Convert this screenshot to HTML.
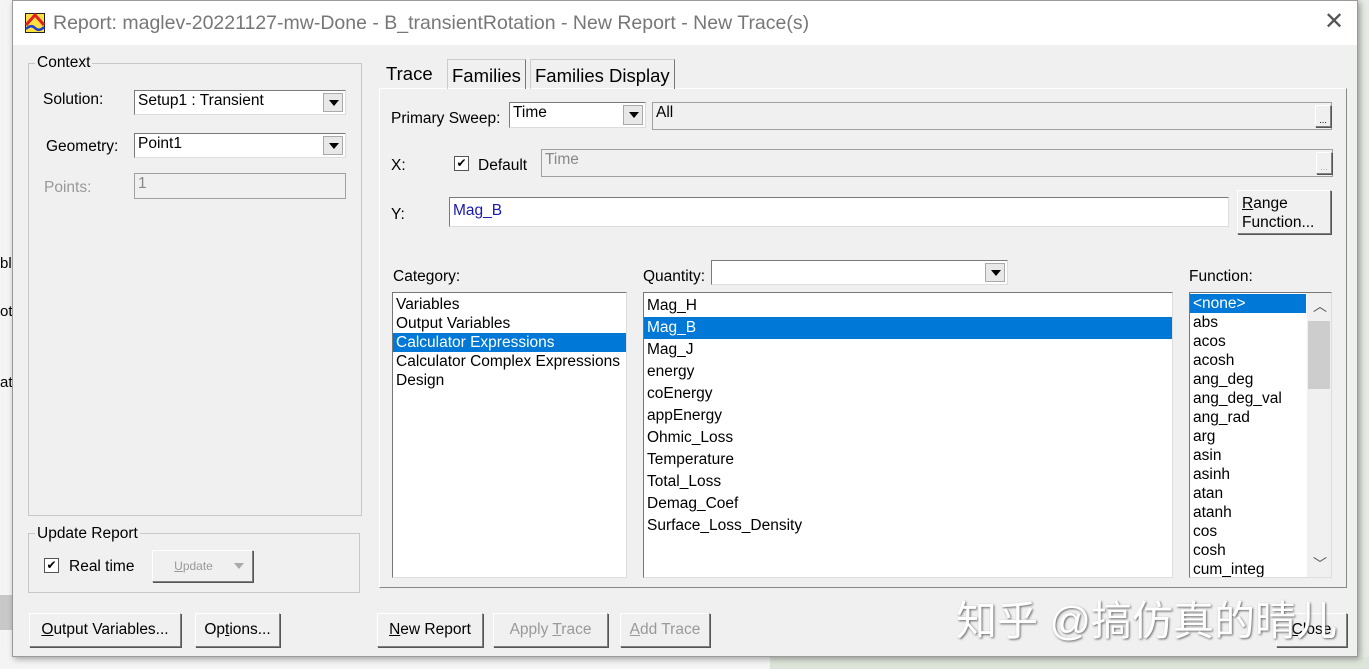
<!DOCTYPE html>
<html><head><meta charset="utf-8"><style>
*{box-sizing:border-box;margin:0;padding:0}
body{width:1369px;height:669px;overflow:hidden;background:#f4f4f4;font-family:"Liberation Sans","Noto Sans CJK SC",sans-serif;font-size:15.5px;color:#000;position:relative}
.a{position:absolute;white-space:nowrap}
.dlg{position:absolute;left:12px;top:0;width:1346px;height:657px;background:#f0f0f0;border:1px solid #9a9a9a;box-shadow:2px 2px 6px rgba(0,0,0,.35)}
.title{position:absolute;left:0;top:0;width:100%;height:44px;background:#fff}
.grp{position:absolute;border:1px solid #c8c8c8}
.lbl{position:absolute;background:#f0f0f0;padding:0 2px}
.in{position:absolute;background:#fff;border:1px solid #7a7a7a;border-right-color:#ddd;border-bottom-color:#ddd;padding:1px 3px}
.dis{background:#f0f0f0;color:#888;border-color:#a0a0a0}
.dd{position:absolute;right:2px;top:2px;width:20px;bottom:2px;background:#e8e8e8;border:1px solid #aaa}
.dd:after{content:"";position:absolute;left:5px;top:6px;border-left:5px solid transparent;border-right:5px solid transparent;border-top:6px solid #000}
.btn{position:absolute;background:#f0f0f0;border:1px solid #fff;border-right-color:#808080;border-bottom-color:#808080;box-shadow:1px 1px 0 #555;text-align:center}
.list{position:absolute;background:#fff;border:1px solid #777;border-right-color:#ddd;border-bottom-color:#ddd;line-height:19px}
.sel{background:#0078d7;color:#fff}
.chk{position:absolute;width:15px;height:15px;background:#fff;border:1px solid #555;font-size:12px;line-height:13px;text-align:center}
u{text-decoration:underline}
</style></head><body>
<div class="a" style="left:0;top:255px;font-size:15px">bl</div>
<div class="a" style="left:0;top:303px;font-size:15px">ot</div>
<div class="a" style="left:0;top:374px;font-size:15px">ati</div>
<div class="a" style="left:0;top:595px;width:12px;height:35px;background:#c8c8c8"></div>
<div class="a" style="left:1358px;top:0;width:11px;height:669px;background:#e6ebe4"></div>
<div class="a" style="left:770px;top:657px;width:599px;height:12px;background:#dde5da"></div>
<div class="dlg">
 <div class="title">
  <svg class="a" style="left:12px;top:12px" width="20" height="20" viewBox="0 0 20 20"><rect x="0.5" y="0.5" width="19" height="19" fill="#ffe040" stroke="#222"/><path d="M1 12 L10 2 L19 12" stroke="#e02020" stroke-width="3" fill="none"/><path d="M1 16 Q6 11 10 15 T19 14" stroke="#2040d0" stroke-width="2.5" fill="none"/></svg>
  <div class="a" style="left:40px;top:11px;font-size:19.5px;color:#777">Report: maglev-20221127-mw-Done - B_transientRotation - New Report - New Trace(s)</div>
  <div class="a" style="left:1311px;top:6px;font-size:24px;color:#555">✕</div>
 </div>
 <div class="grp" style="left:15px;top:62px;width:334px;height:453px"></div>
 <div class="lbl" style="left:22px;top:53px">Context</div>
 <div class="a" style="left:30px;top:90px">Solution:</div>
 <div class="in" style="left:121px;top:89px;width:212px;height:25px">Setup1 : Transient<div class="dd"></div></div>
 <div class="a" style="left:33px;top:137px">Geometry:</div>
 <div class="in" style="left:121px;top:132px;width:212px;height:25px">Point1<div class="dd"></div></div>
 <div class="a" style="left:31px;top:178px;color:#999">Points:</div>
 <div class="in dis" style="left:121px;top:172px;width:212px;height:26px">1</div>
 <div class="grp" style="left:15px;top:532px;width:332px;height:60px"></div>
 <div class="lbl" style="left:22px;top:524px">Update Report</div>
 <div class="chk" style="left:31px;top:557px">✔</div>
 <div class="a" style="left:56px;top:557px">Real time</div>
 <div class="btn" style="left:139px;top:549px;width:101px;height:32px;color:#999;font-size:12px;line-height:30px;padding-right:18px"><u>U</u>pdate<span style="position:absolute;right:8px;top:12px;border-left:5px solid transparent;border-right:5px solid transparent;border-top:6px solid #aaa"></span></div>
 <div class="btn" style="left:16px;top:612px;width:152px;height:34px;line-height:32px"><u>O</u>utput Variables...</div>
 <div class="btn" style="left:182px;top:612px;width:85px;height:34px;line-height:32px">Op<u>t</u>ions...</div>
 <div class="grp" style="left:366px;top:87px;width:968px;height:500px;border-color:#fff #888 #888 #fff"></div>
 <div class="a" style="left:373px;top:62px;font-size:18.5px">Trace</div>
 <div class="a" style="left:434px;top:58px;height:30px;border:1px solid #ccc;border-bottom:none;border-right-color:#777;padding:5px 4px;font-size:18.5px">Families</div>
 <div class="a" style="left:517px;top:58px;height:30px;border:1px solid #ccc;border-bottom:none;border-right-color:#777;padding:5px 4px;font-size:18.5px">Families Display</div>
 <div class="a" style="left:378px;top:109px">Primary Sweep:</div>
 <div class="in" style="left:496px;top:101px;width:137px;height:26px">Time<div class="dd"></div></div>
 <div class="in dis" style="left:639px;top:101px;width:680px;height:28px;color:#000">All<div class="btn" style="right:0;top:2px;width:16px;height:22px;font-size:9px;line-height:28px">...</div></div>
 <div class="a" style="left:378px;top:156px">X:</div>
 <div class="chk" style="left:441px;top:155px">✔</div>
 <div class="a" style="left:465px;top:156px">Default</div>
 <div class="in dis" style="left:528px;top:148px;width:792px;height:28px">Time<div class="btn" style="right:0;top:2px;width:16px;height:22px;font-size:9px;line-height:28px;color:#aaa">...</div></div>
 <div class="a" style="left:378px;top:205px">Y:</div>
 <div class="in" style="left:436px;top:196px;width:780px;height:30px;color:#1a1ab0;padding-top:4px">Mag_B</div>
 <div class="btn" style="left:1224px;top:189px;width:94px;height:44px;text-align:left;padding:3px 4px;line-height:19px"><u>R</u>ange<br>Function...</div>
 <div class="a" style="left:380px;top:267px">Category:</div>
 <div class="list" style="left:379px;top:291px;width:235px;height:286px;padding-top:2px">
  <div style="padding-left:3px">Variables</div><div style="padding-left:3px">Output Variables</div><div class="sel" style="padding-left:3px">Calculator Expressions</div><div style="padding-left:3px">Calculator Complex Expressions</div><div style="padding-left:3px">Design</div></div>
 <div class="a" style="left:630px;top:267px">Quantity:</div>
 <div class="in" style="left:698px;top:259px;width:297px;height:25px"><div class="dd"></div></div>
 <div class="list" style="left:630px;top:291px;width:530px;height:286px;line-height:22px;padding-top:2px">
  <div style="padding-left:3px">Mag_H</div><div class="sel" style="padding-left:3px">Mag_B</div><div style="padding-left:3px">Mag_J</div><div style="padding-left:3px">energy</div><div style="padding-left:3px">coEnergy</div><div style="padding-left:3px">appEnergy</div><div style="padding-left:3px">Ohmic_Loss</div><div style="padding-left:3px">Temperature</div><div style="padding-left:3px">Total_Loss</div><div style="padding-left:3px">Demag_Coef</div><div style="padding-left:3px">Surface_Loss_Density</div></div>
 <div class="a" style="left:1176px;top:267px">Function:</div>
 <div class="list" style="left:1176px;top:291px;width:143px;height:286px;overflow:hidden;padding-top:1px">
  <div class="sel" style="width:116px;padding-left:3px">&lt;none&gt;</div>
  <div style="padding-left:3px">abs</div><div style="padding-left:3px">acos</div><div style="padding-left:3px">acosh</div><div style="padding-left:3px">ang_deg</div><div style="padding-left:3px">ang_deg_val</div><div style="padding-left:3px">ang_rad</div><div style="padding-left:3px">arg</div><div style="padding-left:3px">asin</div><div style="padding-left:3px">asinh</div><div style="padding-left:3px">atan</div><div style="padding-left:3px">atanh</div><div style="padding-left:3px">cos</div><div style="padding-left:3px">cosh</div><div style="padding-left:3px">cum_integ</div>
  <div class="a" style="left:117px;top:0;width:24px;height:284px;background:#f0f0f0"></div>
  <div class="a" style="left:118px;top:28px;width:22px;height:68px;background:#cdcdcd"></div>
  <div class="a" style="left:123px;top:4px;font-size:14px;color:#555">︿</div>
  <div class="a" style="left:123px;top:262px;font-size:14px;color:#555">﹀</div>
 </div>
 <div class="btn" style="left:364px;top:612px;width:106px;height:34px;line-height:32px"><u>N</u>ew Report</div>
 <div class="btn" style="left:480px;top:612px;width:115px;height:34px;line-height:32px;color:#999">Apply <u>T</u>race</div>
 <div class="btn" style="left:607px;top:612px;width:90px;height:34px;line-height:32px;color:#999"><u>A</u>dd Trace</div>
 <div class="btn" style="left:1263px;top:612px;width:71px;height:34px;line-height:32px"><u>C</u>lose</div>
 <div class="a" style="left:943px;top:586px;font-size:41px;color:#fff;text-shadow:1px 1px 2px #666">知乎 @搞仿真的晴儿</div>
</div>
</body></html>
